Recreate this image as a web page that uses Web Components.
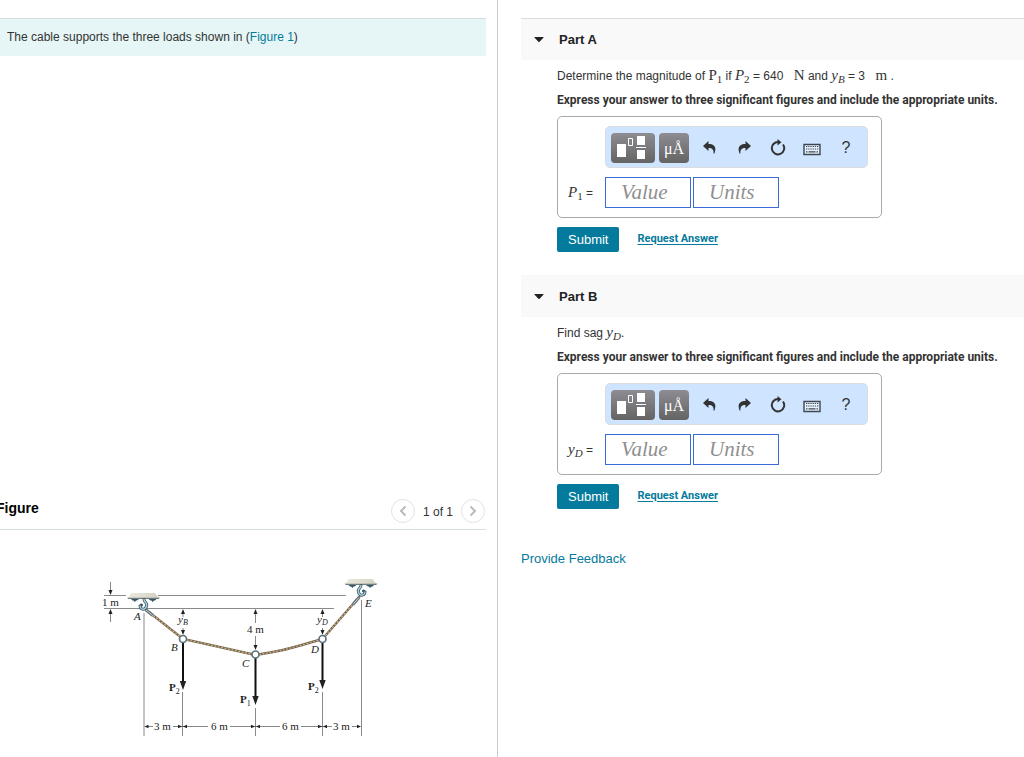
<!DOCTYPE html>
<html lang="en">
<head>
<meta charset="utf-8">
<meta name="viewport" content="width=device-width, initial-scale=1">
<title>Cable with three loads</title>
<style>
    body {
        margin: 0;
        background: #fff;
        color: #333;
        font: 12px/24px "Liberation Sans", Arial, sans-serif;
    }
    a {
        color: #047a9c;
        text-decoration: none;
    }
</style>
</head>
<body>
<problem-page>
    <problem-intro slot="left">The cable supports the three loads shown in (<a href="#figure">Figure 1</a>)</problem-intro>
    <figure-panel slot="left" id="figure" heading="Figure" count="1 of 1">
        <cable-diagram></cable-diagram>
    </figure-panel>

    <problem-part heading="Part A" class="first">
        <span slot="question">Determine the magnitude of <math-symbol sub="1" upright>P</math-symbol> if <math-symbol sub="2">P</math-symbol> = 640 &nbsp;<math-symbol upright>N</math-symbol> and <math-symbol sub="B">y</math-symbol> = 3 &nbsp;<math-symbol upright>m</math-symbol> .</span>
        <span slot="instructions">Express your answer to three significant figures and include the appropriate units.</span>
        <math-symbol slot="symbol" sub="1">P</math-symbol>
    </problem-part>
    <problem-part heading="Part B">
        <span slot="question">Find sag <math-symbol sub="D">y</math-symbol>.</span>
        <span slot="instructions">Express your answer to three significant figures and include the appropriate units.</span>
        <math-symbol slot="symbol" sub="D">y</math-symbol>
    </problem-part>
    <page-footer><a href="#feedback">Provide Feedback</a></page-footer>
</problem-page>

<script>
class ProblemPage extends HTMLElement {
    constructor() {
        super();
        this.attachShadow({ mode: 'open' });
    }

    connectedCallback() {
        this.shadowRoot.innerHTML = `
            <style>
                :host {
                    display: grid;
                    grid-template-columns: 486fr 538fr;
                    min-height: 100vh;
                }
                .left {
                    display: flex;
                    flex-direction: column;
                    min-width: 0;
                    padding: 18px 0 0;
                    overflow: hidden;
                }
                .right {
                    min-width: 0;
                    margin-left: 11px;
                    padding: 18px 0 0 23px;
                    border-left: 1px solid #c5cdd6;
                }
            </style>
            <section class="left"><slot name="left"></slot></section>
            <main class="right"><slot></slot></main>
        `;
    }
}

class ProblemIntro extends HTMLElement {
    constructor() {
        super();
        this.attachShadow({ mode: 'open' });
    }

    connectedCallback() {
        this.shadowRoot.innerHTML = `
            <style>
                :host {
                    display: block;
                    padding: 6px 7px 7px;
                    border-top: 1px solid #d3dddd;
                    background: #e6f6f6;
                }
            </style>
            <slot></slot>
        `;
    }
}

class FigurePanel extends HTMLElement {
    constructor() {
        super();
        this.attachShadow({ mode: 'open' });
    }

    connectedCallback() {
        this.shadowRoot.innerHTML = `
            <style>
                :host {
                    display: block;
                    margin-top: auto;
                }
                header {
                    display: flex;
                    align-items: center;
                    padding-bottom: 5px;
                    border-bottom: 1px solid #d5dcdc;
                }
                h2 {
                    margin: 0 auto 6px -4px;
                    color: #000;
                    font-size: 14px;
                    line-height: 20px;
                }
                nav {
                    display: flex;
                    align-items: center;
                    gap: 8px;
                    padding-right: 1px;
                }
                nav span {
                    padding-top: 2px;
                    line-height: 20px;
                }
                button {
                    display: grid;
                    place-items: center;
                    width: 24px;
                    height: 24px;
                    padding: 0;
                    border: 1px solid #e3e3e3;
                    border-radius: 50%;
                    background: #fff;
                }
                svg {
                    fill: none;
                    stroke: #bbb;
                    stroke-width: 2;
                }
                .drawing {
                    padding: 45px 0 17px 95px;
                }
            </style>
            <header>
                <h2>${this.getAttribute('heading')}</h2>
                <nav>
                    <button type="button" aria-label="Previous figure">
                        <svg width="8" height="12" viewBox="0 0 8 12"><path d="M6.500 1.500 2 6l4.500 4.500"/></svg>
                    </button>
                    <span>${this.getAttribute('count')}</span>
                    <button type="button" aria-label="Next figure">
                        <svg width="8" height="12" viewBox="0 0 8 12"><path d="M1.500 1.500 6 6l-4.500 4.500"/></svg>
                    </button>
                </nav>
            </header>
            <div class="drawing"><slot></slot></div>
        `;
    }
}

class CableDiagram extends HTMLElement {
    constructor() {
        super();
        this.attachShadow({ mode: 'open' });
    }

    connectedCallback() {
        this.shadowRoot.innerHTML = `
            <style>
                :host {
                    display: block;
                }
                svg {
                    display: block;
                    font: 11px "Liberation Serif", "Times New Roman", serif;
                    fill: #222;
                }
                .thin {
                    fill: none;
                    stroke: #8a8a8a;
                }
                .dim {
                    fill: none;
                    stroke: #555;
                    stroke-width: 0.700;
                }
                .load {
                    stroke: #111;
                    stroke-width: 2;
                }
                .rope {
                    fill: none;
                    stroke: #756249;
                    stroke-width: 2.400;
                }
                .strand {
                    fill: none;
                    stroke: #cdb893;
                    stroke-width: 1.200;
                    stroke-dasharray: 2 1.500;
                }
                .ring {
                    fill: #fff;
                    stroke: #5d7480;
                    stroke-width: 1.700;
                }
                .i { font-style: italic; }
                .b { font-weight: bold; }
                .s { font-size: 8px; font-weight: normal; }
            </style>
            <svg width="290" height="165" viewBox="95 575 290 165" role="img" aria-label="Cable ABCDE with loads at B, C and D">
                <defs>
                    <linearGradient id="plate" x1="0" x2="1">
                        <stop offset="0" stop-color="#eceade"/>
                        <stop offset="1" stop-color="#d2d1c3"/>
                    </linearGradient>
                    <path id="up" d="M0 0l-2 5h4z"/>
                    <path id="down" d="M0 0l-2-5h4z"/>
                    <path id="to-left" d="M0 0l4-1.800v3.600z"/>
                    <path id="to-right" d="M0 0l-4-1.800v3.600z"/>
                    <path id="load-head" d="M0 0l-3.200-9h6.400z"/>
                    <g id="hanger">
                        <path d="M-12.500-11H11.500Q13-8 16.500-6h-33Q-13.500-8-12.500-11z" fill="url(#plate)"/>
                        <path d="M-16.500-6.200h33L15-5h-30z" fill="#777b7a"/>
                        <path d="M-12.500-5h8l-2 1.500h-1l-1 1.500-1.500-1.500h-1zM5-5h8l-1.500 1.500h-1L9-2 8-3.500H7z" fill="#31576a"/>
                    </g>
                    <g id="hook" fill="none" stroke-linecap="round">
                        <path d="M.5-4.500Q1-2.500 2.500-1T2.500 3.500Q.5 6-1.500 5T-3.500 2L-2 1" stroke="#36596a" stroke-width="3"/>
                        <path d="M.5-4.500Q1-2.500 2.500-1T2.500 3.500Q.5 6-1.500 5T-3.500 2" stroke="#b0d5e2" stroke-width="1.300"/>
                    </g>
                </defs>

                <path class="thin" d="M104 595.500h22M158 595.500h188M104 608.500h230"/>
                <path class="thin" d="M144 613v123M182.500 692v44M255.500 708v28M322.500 692v44M361.500 600v136"/>

                <path class="dim" d="M110.500 582v8M110.500 613v9M183 614v3M183 628v5M255.500 614v9M255.500 636v9M322.500 614v3M322.500 628v5"/>
                <use href="#down" x="110.500" y="595"/><use href="#up" x="110.500" y="609"/>
                <use href="#up" x="183" y="609"/><use href="#down" x="183" y="635"/>
                <use href="#up" x="255.500" y="609"/><use href="#down" x="255.500" y="650"/>
                <use href="#up" x="322.500" y="609"/><use href="#down" x="322.500" y="635"/>

                <path class="dim" d="M146 726.500h7M173 726.500h35M230 726.500h50M301 726.500h31M352 726.500h8"/>
                <use href="#to-left" x="144.500" y="726.500"/><use href="#to-right" x="182" y="726.500"/>
                <use href="#to-left" x="183" y="726.500"/><use href="#to-right" x="255" y="726.500"/>
                <use href="#to-left" x="256" y="726.500"/><use href="#to-right" x="322" y="726.500"/>
                <use href="#to-left" x="323" y="726.500"/><use href="#to-right" x="361" y="726.500"/>

                <use href="#hanger" x="143.500" y="604"/>
                <use href="#hanger" x="361" y="590"/>

                <path class="rope" d="M145 609 183 639Q215 646 255.500 655 274 652 283 650T322.500 639L360 596"/>
                <path class="strand" d="M145 609 183 639Q215 646 255.500 655 274 652 283 650T322.500 639L360 596"/>
                <path d="M146 610l7 5.500M353 604.500l6-7" fill="none" stroke="#607079" stroke-width="3"/>
                <path d="M146 610l7 5.500M353 604.500l6-7" fill="none" stroke="#c8d1d3"/>
                <use href="#hook" transform="translate(143.500 604)"/>
                <use href="#hook" transform="translate(361.500 590) scale(-1 1)"/>

                <path class="load" d="M183 642v40M255.500 658v40M322.500 642v40"/>
                <use href="#load-head" x="183" y="690"/>
                <use href="#load-head" x="255.500" y="705"/>
                <use href="#load-head" x="322.500" y="689"/>
                <circle class="ring" cx="183" cy="639" r="3.500"/>
                <circle class="ring" cx="255.500" cy="654.500" r="3.500"/>
                <circle class="ring" cx="322.500" cy="639" r="3.500"/>

                <text x="102" y="606">1 m</text>
                <text x="154" y="730">3 m</text>
                <text x="211" y="730">6 m</text>
                <text x="282" y="730">6 m</text>
                <text x="333" y="730">3 m</text>
                <text x="247" y="633">4 m</text>
                <g class="i">
                    <text x="134" y="620">A</text>
                    <text x="171" y="651">B</text>
                    <text x="242" y="667">C</text>
                    <text x="311" y="653">D</text>
                    <text x="365" y="607">E</text>
                    <text x="178" y="623">y<tspan class="s" dy="2">B</tspan></text>
                    <text x="317" y="623">y<tspan class="s" dy="2">D</tspan></text>
                </g>
                <g class="b">
                    <text x="169" y="691">P<tspan class="s" dy="3">2</tspan></text>
                    <text x="240" y="703">P<tspan class="s" dy="3">1</tspan></text>
                    <text x="308" y="690">P<tspan class="s" dy="3">2</tspan></text>
                </g>
            </svg>
        `;
    }
}

class MathSymbol extends HTMLElement {
    constructor() {
        super();
        this.attachShadow({ mode: 'open' });
    }

    connectedCallback() {
        const sub = this.getAttribute('sub');
        this.shadowRoot.innerHTML = `
            <style>
                :host {
                    font: italic 15px/1 "Liberation Serif", "Times New Roman", serif;
                    line-height: 0;
                }
                :host([upright]) {
                    font-style: normal;
                }
                sub {
                    font-size: 11px;
                    line-height: 0;
                    vertical-align: -3px;
                }
                sub.digit {
                    font-style: normal;
                }
            </style>
            <slot></slot>${sub ? `<sub class="${/\d/.test(sub) ? 'digit' : ''}">${sub}</sub>` : ''}`;
    }
}

class ProblemPart extends HTMLElement {
    constructor() {
        super();
        this.attachShadow({ mode: 'open' });
    }

    connectedCallback() {
        this.shadowRoot.innerHTML = `
            <style>
                :host {
                    display: block;
                    margin-bottom: 23px;
                }
                header {
                    display: flex;
                    align-items: center;
                    height: 41px;
                    border-top: 1px solid #f9f9f9;
                    background: #f9f9f9;
                }
                :host(.first) header {
                    border-top-color: #dcdcdc;
                }
                .toggle {
                    display: grid;
                    place-items: center;
                    width: 36px;
                    height: 24px;
                    padding: 0;
                    border: 0;
                    background: none;
                }
                h2 {
                    margin: 0 2px;
                    color: #222;
                    font-size: 13px;
                }
                .body {
                    padding: 4px 0 0 36px;
                }
                p {
                    margin: 0;
                }
                .instructions {
                    font-family: Roboto, "Liberation Sans", sans-serif;
                    font-weight: bold;
                }
                answer-box {
                    margin: 4px 0 9px;
                }
                .actions {
                    display: flex;
                    align-items: center;
                    gap: 18px;
                }
                .submit {
                    height: 25px;
                    padding: 0 11px;
                    border: 0;
                    border-radius: 2px;
                    background: #047a9c;
                    color: #fff;
                    font: 13px "Liberation Sans", Arial, sans-serif;
                }
                a {
                    color: #047a9c;
                    font: bold 11px/22px Roboto, "Liberation Sans", sans-serif;
                    margin-bottom: 2px;
                    text-underline-offset: 2px;
                }
            </style>
            <header>
                <button class="toggle" type="button" aria-expanded="true" aria-label="Collapse ${this.getAttribute('heading')}">
                    <svg width="10" height="6" viewBox="0 0 10 6"><path d="M1 0h8q1 0 .400.800L5.600 4.800q-.600.600-1.200 0L.600.800Q0 0 1 0z" fill="#222"/></svg>
                </button>
                <h2>${this.getAttribute('heading')}</h2>
            </header>
            <div class="body">
                <p><slot name="question"></slot></p>
                <p class="instructions"><slot name="instructions"></slot></p>
                <answer-box><slot name="symbol"></slot></answer-box>
                <div class="actions">
                    <button class="submit" type="button">Submit</button>
                    <a href="#request">Request Answer</a>
                </div>
            </div>
        `;
    }
}

class AnswerBox extends HTMLElement {
    constructor() {
        super();
        this.attachShadow({ mode: 'open' });
    }

    connectedCallback() {
        this.shadowRoot.innerHTML = `
            <style>
                :host {
                    box-sizing: border-box;
                    display: grid;
                    grid-template-columns: 37px 1fr;
                    row-gap: 9px;
                    max-width: 325px;
                    padding: 9px 13px 9px 10px;
                    border: 1px solid #a9a9a9;
                    border-radius: 5px;
                }
                answer-toolbar {
                    grid-column: 2;
                }
                label {
                    align-self: center;
                    white-space: nowrap;
                }
                .fields {
                    display: flex;
                    gap: 2px;
                }
                input {
                    box-sizing: border-box;
                    width: 86px;
                    height: 31px;
                    padding: 0 0 0 15px;
                    border: 1px solid #3b6bd6;
                    border-radius: 0;
                    background: #fff;
                    font: italic 21px "Liberation Serif", "Times New Roman", serif;
                }
                input::placeholder {
                    color: #8f8f8f;
                    opacity: 1;
                }
            </style>
            <answer-toolbar></answer-toolbar>
            <label for="value"><slot></slot> =</label>
            <div class="fields">
                <input id="value" type="text" placeholder="Value">
                <input type="text" placeholder="Units" aria-label="Units">
            </div>
        `;
    }
}

class AnswerToolbar extends HTMLElement {
    constructor() {
        super();
        this.attachShadow({ mode: 'open' });
    }

    connectedCallback() {
        this.shadowRoot.innerHTML = `
            <style>
                :host {
                    box-sizing: border-box;
                    display: flex;
                    align-items: center;
                    height: 42px;
                    padding: 1px 2px 0 5px;
                    border: 1px solid #d9dde2;
                    border-radius: 5px;
                    background: #cfe5ff;
                }
                button {
                    display: grid;
                    place-items: center;
                    width: 34px;
                    height: 30px;
                    padding: 0;
                    border: 0;
                    background: none;
                    color: #333;
                    font: 16px "Liberation Sans", Arial, sans-serif;
                }
                .dark {
                    width: 30px;
                    margin-right: 4px;
                    border-radius: 4px;
                    background: linear-gradient(#8d8c92, #646464);
                    color: #fff;
                    font: 16px/32px "Liberation Serif", "Times New Roman", serif;
                }
                .wide {
                    width: 44px;
                }
            </style>
            <button class="dark wide" type="button" aria-label="Templates">
                <svg width="44" height="30" viewBox="0 0 44 30">
                    <path d="M6 11h9v13H6zM26 3h8v9h-8zM25 14h10v1H25zM26 17h8v9h-8z" fill="#fff"/>
                    <path d="M17.500 5.500h4v7h-4z" fill="none" stroke="#fff"/>
                </svg>
            </button>
            <button class="dark" type="button" aria-label="Symbols">μÅ</button>
            <button type="button" aria-label="Undo">
                <svg width="14" height="14" viewBox="0 0 14 14"><path d="M5.500 0v3C11 3 14 5.500 11.500 12.500h-1C11 9 9.500 7 5.500 7v3L0 5z" fill="#333"/></svg>
            </button>
            <button type="button" aria-label="Redo">
                <svg width="14" height="14" viewBox="0 0 14 14"><path d="M8.500 0v3C3 3 0 5.500 2.500 12.500h1C3 9 4.500 7 8.500 7v3L14 5z" fill="#333"/></svg>
            </button>
            <button type="button" aria-label="Reset">
                <svg width="16" height="17" viewBox="0 0 16 17">
                    <path d="M8.500 3A6.200 6.200 0 1 0 13 5.500" fill="none" stroke="#333" stroke-width="2"/>
                    <path d="M7.500 0v6.500l4-3.300z" fill="#333"/>
                </svg>
            </button>
            <button type="button" aria-label="Keyboard shortcuts">
                <svg width="18" height="16" viewBox="0 0 18 16">
                    <path d="M1 4.500h16v10H1z" fill="#e6f2ff" stroke="#3d4650" stroke-width="1.400"/>
                    <path d="M3 6.500h12.500M3 9h12.500" fill="none" stroke="#3d4650" stroke-width="1.200" stroke-dasharray="1.300.900"/>
                    <path d="M3 11.800h1.500M5.500 11.800h7M13.500 11.800H15" fill="none" stroke="#3d4650" stroke-width="1.200"/>
                </svg>
            </button>
            <button type="button" aria-label="Help">?</button>
        `;
    }
}

class PageFooter extends HTMLElement {
    constructor() {
        super();
        this.attachShadow({ mode: 'open' });
    }

    connectedCallback() {
        this.shadowRoot.innerHTML = `
            <style>
                :host {
                    display: block;
                    padding: 15px 0;
                    font-size: 13px;
                }
            </style>
            <slot></slot>
        `;
    }
}

customElements.define('problem-page', ProblemPage);
customElements.define('problem-intro', ProblemIntro);
customElements.define('figure-panel', FigurePanel);
customElements.define('cable-diagram', CableDiagram);
customElements.define('math-symbol', MathSymbol);
customElements.define('answer-toolbar', AnswerToolbar);
customElements.define('answer-box', AnswerBox);
customElements.define('problem-part', ProblemPart);
customElements.define('page-footer', PageFooter);
</script>
</body>
</html>
